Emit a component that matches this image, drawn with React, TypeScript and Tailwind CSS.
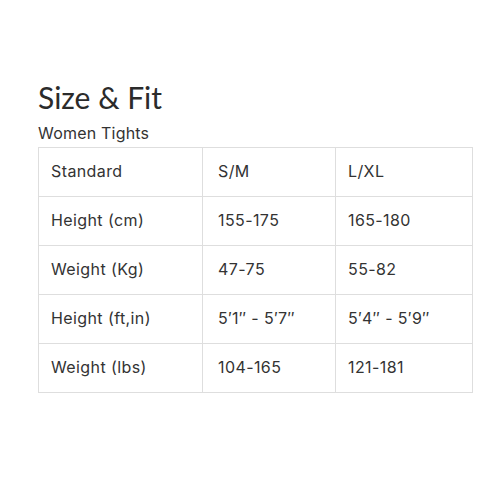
const rows = [
  ["Standard", "S/M", "L/XL"],
  ["Height (cm)", "155-175", "165-180"],
  ["Weight (Kg)", "47-75", "55-82"],
  ["Height (ft,in)", "5\u20321\u2033 - 5\u20327\u2033", "5\u20324\u2033 - 5\u20329\u2033"],
  ["Weight (lbs)", "104-165", "121-181"],
];

export default function App() {
  return (
    <div className="w-[500px] h-[482px] bg-white font-['Inter',sans-serif] text-[#2b2b2b]">
      <div className="pl-[38px] pt-[79px]">
        <h2 className="font-['Lato',sans-serif] text-[30px] leading-[36px] font-normal">Size &amp; Fit</h2>
        <p className="mt-[8px] text-[16px] leading-[20px] tracking-[0.2px] text-[#333]">Women Tights</p>
        <table className="mt-[4px] border-collapse text-[16px] tracking-[0.4px] text-[#333]">
          <tbody>
            {rows.map((row) => (
              <tr key={row[0]} className="h-[49px]">
                <td className="w-[164px] border border-[#dedede] pl-[12px] pb-[2px]">{row[0]}</td>
                <td className="w-[133px] border border-[#dedede] pl-[15px] pb-[2px]">{row[1]}</td>
                <td className="w-[137px] border border-[#dedede] pl-[12px] pb-[2px]">{row[2]}</td>
              </tr>
            ))}
          </tbody>
        </table>
      </div>
    </div>
  );
}
